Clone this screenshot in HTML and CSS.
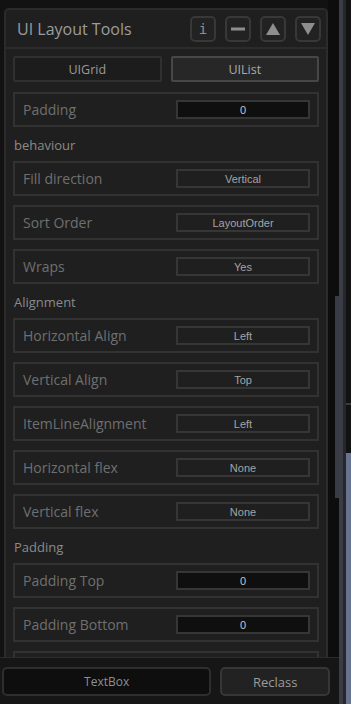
FILE: index.html
```html
<!DOCTYPE html>
<html lang="en">
<head>
<meta charset="UTF-8">
<meta name="viewport" content="width=device-width, initial-scale=1.0">
<title>UI Layout Tools</title>
<link rel="stylesheet" href="styles.css">
</head>
<body>
<div class="pantalla">
<div class="columna">
<div class="zona">
<div class="panel">
<div class="titulo">
<h1>UI Layout Tools</h1>
<div class="acciones">
<button class="accion icono-i">i</button>
<button class="accion"><svg width="14" height="4" viewBox="0 0 14 4"><rect x="0" y="0.5" width="14" height="3" fill="#8e8e8e"/></svg></button>
<button class="accion"><svg width="16" height="14" viewBox="0 0 16 14"><polygon points="8,1 15,13 1,13" fill="#8e8e8e"/></svg></button>
<button class="accion"><svg width="16" height="14" viewBox="0 0 16 14"><polygon points="1,1 15,1 8,13" fill="#8e8e8e"/></svg></button>
</div>
</div>

<div class="contenido">
<div class="pestanas">
<button class="pestana">UIGrid</button>
<button class="pestana activa">UIList</button>
</div>

<div class="fila"><span class="etiqueta">Padding</span><span class="campo numero">0</span></div>

<div class="seccion">behaviour</div>
<div class="fila"><span class="etiqueta">Fill direction</span><span class="campo">Vertical</span></div>
<div class="fila"><span class="etiqueta">Sort Order</span><span class="campo">LayoutOrder</span></div>
<div class="fila"><span class="etiqueta">Wraps</span><span class="campo">Yes</span></div>

<div class="seccion">Alignment</div>
<div class="fila"><span class="etiqueta">Horizontal Align</span><span class="campo">Left</span></div>
<div class="fila"><span class="etiqueta">Vertical Align</span><span class="campo">Top</span></div>
<div class="fila"><span class="etiqueta">ItemLineAlignment</span><span class="campo">Left</span></div>
<div class="fila"><span class="etiqueta">Horizontal flex</span><span class="campo">None</span></div>
<div class="fila"><span class="etiqueta">Vertical flex</span><span class="campo">None</span></div>

<div class="seccion">Padding</div>
<div class="fila"><span class="etiqueta">Padding Top</span><span class="campo numero">0</span></div>
<div class="fila"><span class="etiqueta">Padding Bottom</span><span class="campo numero">0</span></div>
<!-- fila cortada por el pie -->
<div class="fila"></div>
</div>
</div>

<div class="pista">
<div class="pulgar"></div>
</div>
</div>

<div class="pie">
<button class="boton-pie oscuro">TextBox</button>
<button class="boton-pie">Reclass</button>
</div>
</div>

<div class="borde-claro"></div>
<div class="borde-oscuro"></div>
<div class="fondo">
<div class="fondo-negro"></div>
<div class="fondo-linea"></div>
<div class="fondo-negro corto"></div>
<div class="fondo-imagen"></div>
</div>
</div>
</body>
</html>
```

FILE: styles.css
```css
/* Ventana del plugin */
body {
margin: 0;
background-color: #121212;
font-family: "Open Sans", "Noto Sans", sans-serif;
}

button {
font-family: inherit;
cursor: pointer;
}

.pantalla {
display: flex;
height: 704px;
overflow: hidden;
}

.columna {
width: 339px;
display: flex;
flex-direction: column;
}

.zona {
height: 657px;
display: flex;
padding: 8px 0 0 4px;
box-sizing: border-box;
overflow: hidden;
}

.panel {
width: 324px;
background-color: #1f1f1f;
border: 2px solid #2b2b2b;
border-bottom: none;
border-radius: 5px 5px 0 0;
box-sizing: border-box;
flex-shrink: 0;
}

.titulo {
height: 37px;
display: flex;
align-items: center;
justify-content: space-between;
padding: 0 5px 0 11px;
border-bottom: 2px solid #2b2b2b;
}

.titulo h1 {
margin: 0;
font-size: 16px;
font-weight: 400;
color: #9c9c9c;
}

.acciones {
display: flex;
gap: 9px;
}

.accion {
width: 26px;
height: 26px;
padding: 0;
background-color: #222;
border: 2px solid #383838;
border-radius: 5px;
display: flex;
align-items: center;
justify-content: center;
}

.icono-i {
font-family: "DejaVu Sans Mono", monospace;
font-size: 14px;
color: #8e8e8e;
}

.contenido {
padding: 7px 7px 0 7px;
display: flex;
flex-direction: column;
gap: 9px;
}

.pestanas {
display: flex;
gap: 9px;
margin-bottom: 1px;
}

.pestana {
flex: 1;
height: 26px;
background-color: #1c1c1c;
border: 2px solid #303030;
border-radius: 2px;
font-size: 12.5px;
color: #9a9a9a;
}

.pestana.activa {
background-color: #272727;
border-color: #474747;
color: #aaa;
}

.fila {
height: 35px;
box-sizing: border-box;
border: 2px solid #323232;
display: flex;
align-items: center;
justify-content: space-between;
padding: 0 7px 0 8px;
flex-shrink: 0;
}

.etiqueta {
font-size: 14px;
color: #6f6f6f;
}

.campo {
width: 134px;
height: 19px;
box-sizing: border-box;
border: 2px solid #363636;
display: flex;
align-items: center;
justify-content: center;
font-family: "Liberation Sans", Arial, sans-serif;
font-size: 11px;
color: #a4a4a4;
}

.campo.numero {
background-color: #0f0f0f;
color: #c4c4c4;
}

.seccion {
height: 16px;
padding-top: 2px;
box-sizing: border-box;
line-height: 14px;
font-size: 13px;
color: #8a8a8a;
padding-left: 1px;
}

/* Barra de desplazamiento */
.pista {
width: 11px;
display: flex;
justify-content: flex-end;
background-color: #0d0d0d;
margin-top: -8px;
}

.pulgar {
width: 4px;
height: 202px;
margin-top: 296px;
background-color: #393c44;
}

.pie {
flex: 1;
display: flex;
gap: 9px;
padding: 9px 9px 0 2px;
background-color: #161616;
border-top: 1px solid #2c2c2c;
}

.boton-pie {
width: 110px;
height: 29px;
background-color: #222;
border: 2px solid #363636;
border-radius: 5px;
font-size: 13px;
color: #9c9c9c;
}

.boton-pie.oscuro {
width: 210px;
background-color: #0e0e0e;
border-color: #2e2e2e;
font-size: 12px;
color: #8e8e8e;
}

.borde-claro {
width: 4px;
background-color: #3a3d45;
}

.borde-oscuro {
width: 3px;
background-color: #25272c;
}

.fondo {
width: 5px;
display: flex;
flex-direction: column;
}

.fondo-negro {
height: 403px;
background-color: #121212;
}

.fondo-negro.corto {
height: 48px;
}

.fondo-linea {
height: 2px;
background-color: #3b3b3b;
}

.fondo-imagen {
flex: 1;
background-color: #67738f;
}
```
